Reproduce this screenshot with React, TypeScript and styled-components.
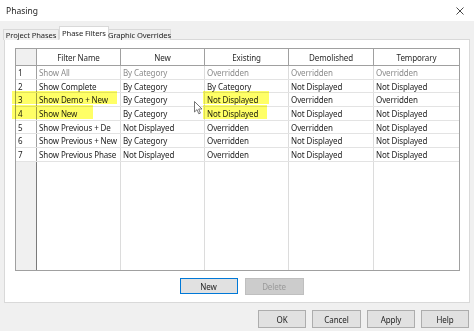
import React from 'react';
import styled, { createGlobalStyle } from 'styled-components';

const Global = createGlobalStyle`
  html, body { margin: 0; padding: 0; background: #f0f0f0; }
  body { font-family: "Noto Sans", "Liberation Sans", sans-serif; }
`;

const Window = styled.div`
  position: relative;
  width: 474px;
  height: 331px;
  background: #f0f0f0;
  display: flex;
  flex-direction: column;
  overflow: hidden;
  font-size: 8px;
  letter-spacing: -0.1px;
  color: #1e1e1e;
`;

const TitleBar = styled.div`
  height: 21px;
  flex: none;
  background: #fff;
  display: flex;
  align-items: center;
  justify-content: space-between;
  padding: 0 10px 0 6px;
  font-size: 8.5px;
  letter-spacing: 0;
  color: #222;
`;

const TabStrip = styled.div`
  display: flex;
  align-items: flex-end;
  height: 14px;
  margin-top: 5px;
  padding-left: 3px;
  margin-bottom: -1px;
  position: relative;
  z-index: 1;
`;

const Tab = styled.div<{ $w: number; $active?: boolean }>`
  box-sizing: border-box;
  width: ${(p) => p.$w}px;
  height: ${(p) => (p.$active ? 14 : 11)}px;
  display: flex;
  align-items: center;
  justify-content: center;
  border: 1px solid #d9d9d9;
  border-bottom: ${(p) => (p.$active ? '1px solid #fff' : 'none')};
  border-left: ${(p) => (p.$active ? '1px solid #d9d9d9' : 'none')};
  background: ${(p) => (p.$active ? '#fff' : '#f0f0f0')};
  color: #1e1e1e;
  white-space: nowrap;
  font-size: 7.6px;
  &:first-child { border-left: 1px solid #d9d9d9; }
`;

const Panel = styled.div`
  box-sizing: border-box;
  margin-left: 4px;
  width: 466px;
  height: 264px;
  flex: none;
  background: #fff;
  border: 1px solid #d9d9d9;
  padding: 8px 0 0 10px;
  display: flex;
  flex-direction: column;
`;

const Table = styled.div`
  box-sizing: border-box;
  width: 445px;
  height: 223px;
  border: 1px solid #a0a0a0;
  display: flex;
  flex-direction: column;
`;

const COLS = '21px 84px 84px 84px 85px 85px';

const HeaderRow = styled.div`
  display: grid;
  grid-template-columns: ${COLS};
  height: 16px;
  border-bottom: 1px solid #a0a0a0;
  flex: none;
`;

const HeaderCell = styled.div<{ $corner?: boolean }>`
  box-sizing: border-box;
  display: flex;
  align-items: center;
  justify-content: center;
  border-right: 1px solid #a0a0a0;
  background: ${(p) => (p.$corner ? '#f0f0f0' : '#fff')};
  color: #2a2a2a;
  &:last-child { border-right: none; }
`;

const Row = styled.div`
  display: grid;
  grid-template-columns: ${COLS};
  height: 13.7px;
  box-sizing: border-box;
  border-bottom: 1px solid #e3e3e3;
  flex: none;
`;

const Cell = styled.div<{ $dim?: boolean; $num?: boolean }>`
  box-sizing: border-box;
  display: flex;
  align-items: center;
  padding-left: 2px;
  border-right: 1px solid ${(p) => (p.$num ? '#a0a0a0' : '#dcdcdc')};
  color: ${(p) => (p.$dim ? '#8c8c8c' : '#1e1e1e')};
  white-space: nowrap;
  overflow: hidden;
  &:last-child { border-right: none; }
`;

const Filler = styled.div`
  flex: 1;
  display: grid;
  grid-template-columns: ${COLS};
`;

const FillCell = styled.div<{ $num?: boolean }>`
  box-sizing: border-box;
  border-right: 1px solid ${(p) => (p.$num ? '#7a7a7a' : '#dcdcdc')};
  background: ${(p) => (p.$num ? '#f0f0f0' : '#fff')};
  &:last-child { border-right: none; }
`;

const PanelButtons = styled.div`
  display: flex;
  justify-content: center;
  gap: 7px;
  margin-top: 7px;
  padding-left: 4px;
  width: 445px;
`;

const Button = styled.div<{ $w: number; $h?: number; $default?: boolean; $disabled?: boolean }>`
  box-sizing: border-box;
  width: ${(p) => p.$w}px;
  height: ${(p) => p.$h ?? 18}px;
  display: flex;
  align-items: center;
  justify-content: center;
  background: ${(p) => (p.$disabled ? '#cccccc' : '#e1e1e1')};
  border: 1px solid ${(p) => (p.$default ? '#0078d7' : p.$disabled ? '#bfbfbf' : '#adadad')};
  color: ${(p) => (p.$disabled ? '#9a9a9a' : '#1e1e1e')};
`;

const Footer = styled.div`
  display: flex;
  justify-content: flex-end;
  gap: 6px;
  padding: 7px 5px 0 0;
`;

const Highlight = styled.div`
  position: absolute;
  background: #ffff66;
  mix-blend-mode: multiply;
  pointer-events: none;
`;

const Cursor = styled.svg`
  position: absolute;
  left: 194px;
  top: 101px;
`;

const rows: { n: string; cells: string[]; dim?: boolean }[] = [
  { n: '1', cells: ['Show All', 'By Category', 'Overridden', 'Overridden', 'Overridden'], dim: true },
  { n: '2', cells: ['Show Complete', 'By Category', 'By Category', 'Not Displayed', 'Not Displayed'] },
  { n: '3', cells: ['Show Demo + New', 'By Category', 'Not Displayed', 'Overridden', 'Overridden'] },
  { n: '4', cells: ['Show New', 'By Category', 'Not Displayed', 'Not Displayed', 'Not Displayed'] },
  { n: '5', cells: ['Show Previous + De', 'Not Displayed', 'Overridden', 'Overridden', 'Not Displayed'] },
  { n: '6', cells: ['Show Previous + New', 'By Category', 'Overridden', 'Not Displayed', 'Not Displayed'] },
  { n: '7', cells: ['Show Previous Phase', 'Not Displayed', 'Overridden', 'Not Displayed', 'Not Displayed'] },
];

const highlights = [
  { l: 12, t: 91, w: 105, h: 13 },
  { l: 12, t: 105, w: 81, h: 14 },
  { l: 203, t: 91, w: 66, h: 13 },
  { l: 203, t: 105, w: 64, h: 14 },
];

export default function App() {
  return (
    <>
      <Global />
      <Window>
        <TitleBar>
          <span>Phasing</span>
          <svg width="8" height="8" viewBox="0 0 8 8">
            <path d="M0.5 0.5 L7.5 7.5 M7.5 0.5 L0.5 7.5" stroke="#333" strokeWidth="0.9" />
          </svg>
        </TitleBar>
        <TabStrip>
          <Tab $w={56}>Project Phases</Tab>
          <Tab $w={50} $active>Phase Filters</Tab>
          <Tab $w={62}>Graphic Overrides</Tab>
        </TabStrip>
        <Panel>
          <Table>
            <HeaderRow>
              <HeaderCell $corner />
              <HeaderCell>Filter Name</HeaderCell>
              <HeaderCell>New</HeaderCell>
              <HeaderCell>Existing</HeaderCell>
              <HeaderCell>Demolished</HeaderCell>
              <HeaderCell>Temporary</HeaderCell>
            </HeaderRow>
            {rows.map((r) => (
              <Row key={r.n}>
                <Cell $num>{r.n}</Cell>
                {r.cells.map((c, i) => (
                  <Cell key={i} $dim={r.dim}>
                    {c}
                  </Cell>
                ))}
              </Row>
            ))}
            <Filler>
              <FillCell $num />
              <FillCell />
              <FillCell />
              <FillCell />
              <FillCell />
              <FillCell />
            </Filler>
          </Table>
          <PanelButtons>
            <Button $w={58} $h={16} $default>New</Button>
            <Button $w={59} $h={17} $disabled>Delete</Button>
          </PanelButtons>
        </Panel>
        <Footer>
          <Button $w={48}>OK</Button>
          <Button $w={49}>Cancel</Button>
          <Button $w={48}>Apply</Button>
          <Button $w={48}>Help</Button>
        </Footer>
        {highlights.map((h, i) => (
          <Highlight key={i} style={{ left: h.l, top: h.t, width: h.w, height: h.h }} />
        ))}
        <Cursor width="9" height="14" viewBox="0 0 9 14">
          <path d="M0.5 0.5 L0.5 11 L3 8.6 L4.8 12.8 L6.4 12.1 L4.7 8 L8 8 Z" fill="#fff" stroke="#555" strokeWidth="0.8" strokeLinejoin="round" />
        </Cursor>
      </Window>
    </>
  );
}
